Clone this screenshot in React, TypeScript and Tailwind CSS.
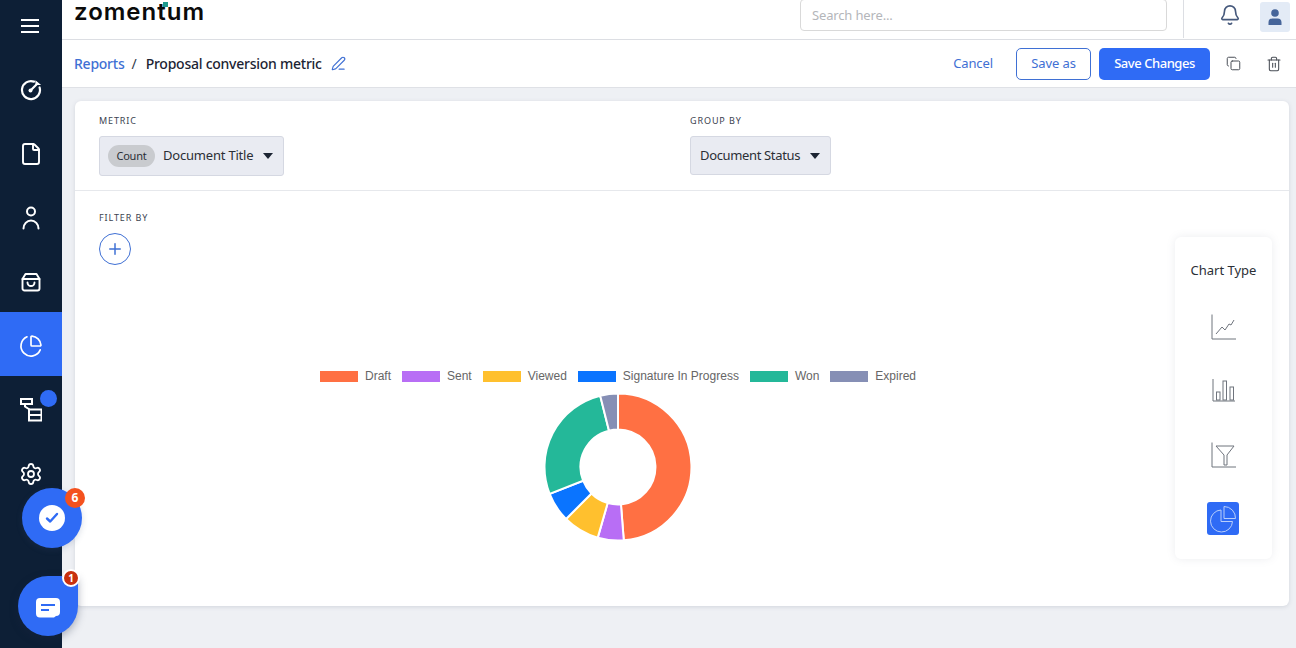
import React from 'react';
import { Bell, ChartPie, Copy, File, PenLine, Plus, Settings, Trash2 } from 'lucide-react';

const legend = [
  { label: 'Draft', color: '#ff7043' },
  { label: 'Sent', color: '#b86ef5' },
  { label: 'Viewed', color: '#ffc02e' },
  { label: 'Signature In Progress', color: '#0a74ff' },
  { label: 'Won', color: '#24b899' },
  { label: 'Expired', color: '#868fb5' },
];

// segment end angles, read off the reference
const stops = [175.5, 196, 225, 248.5, 346, 360];

const arcPath = (start: number, end: number, R: number, r: number, c: number) => {
  const pt = (a: number, rad: number) => {
    const t = ((a - 90) * Math.PI) / 180;
    return `${(c + rad * Math.cos(t)).toFixed(2)} ${(c + rad * Math.sin(t)).toFixed(2)}`;
  };
  const large = end - start > 180 ? 1 : 0;
  return `M${pt(start, R)} A${R} ${R} 0 ${large} 1 ${pt(end, R)} L${pt(end, r)} A${r} ${r} 0 ${large} 0 ${pt(start, r)} Z`;
};

const Donut = () => (
  <svg width="148" height="148" viewBox="0 0 148 148">
    {legend.map((s, i) => (
      <path
        key={s.label}
        d={arcPath(i === 0 ? 0 : stops[i - 1], stops[i], 73.5, 37.5, 74)}
        fill={s.color}
        stroke="#fff"
        strokeWidth="2"
      />
    ))}
  </svg>
);

const MenuIcon = () => (
  <svg width="18" height="14" viewBox="0 0 18 14" fill="none" stroke="#fff" strokeWidth="2">
    <path d="M0 1h18M0 7h18M0 13h18" />
  </svg>
);

const GaugeIcon = () => (
  <svg width="22" height="22" viewBox="0 0 22 22" fill="none" stroke="#fff" strokeWidth="2.2" strokeLinecap="round">
    <path d="M14 2.6A9 9 0 1 0 19.6 8.5" />
    <circle cx="10.5" cy="11.5" r="2" fill="#fff" stroke="none" />
    <path d="M11 11L16.5 5.5" />
    <path d="M16 2.5v3h3.5z" fill="#fff" strokeWidth="1.2" />
  </svg>
);

const PersonIcon = () => (
  <svg width="18" height="24" viewBox="0 0 18 24" fill="none" stroke="#fff" strokeWidth="2" strokeLinecap="round">
    <circle cx="9" cy="5.5" r="4" />
    <path d="M1.5 22.5a7.5 8 0 0 1 15 0" />
  </svg>
);

const BagIcon = () => (
  <svg width="20" height="20" viewBox="0 0 20 20" fill="none" stroke="#fff" strokeWidth="1.9" strokeLinecap="round" strokeLinejoin="round">
    <path d="M4.5 2h11l3 5v9.5a2 2 0 0 1-2 2h-13a2 2 0 0 1-2-2V7z" />
    <path d="M1.5 7h17" />
    <path d="M6.5 10.5a3.5 3.5 0 0 0 7 0" />
  </svg>
);

const TreeIcon = () => (
  <svg width="22" height="24" viewBox="0 0 22 24" fill="none" stroke="#fff" strokeWidth="2">
    <rect x="1" y="1" width="11" height="5" />
    <rect x="9" y="11.5" width="12.5" height="5.5" />
    <rect x="9" y="17" width="12.5" height="5.5" />
    <path d="M5 6v2.5l4.5 3" />
  </svg>
);

const NavItem = ({ active, children }: { active?: boolean; children: React.ReactNode }) => (
  <div className={`h-16 pt-1 flex items-center justify-center ${active ? 'bg-[#2f6bf5]' : ''}`}>{children}</div>
);

const Sidebar = () => (
  <aside className="w-[62px] shrink-0 bg-[#0d1f36] flex flex-col">
    <div className="h-[52px] mb-1 pr-[2px] flex items-center justify-center">
      <MenuIcon />
    </div>
    <NavItem><GaugeIcon /></NavItem>
    <NavItem><File className="h-6 w-6 text-white" strokeWidth={1.9} /></NavItem>
    <NavItem><PersonIcon /></NavItem>
    <NavItem><BagIcon /></NavItem>
    <NavItem active><ChartPie className="h-6 w-6 text-white" strokeWidth={1.7} /></NavItem>
    <NavItem><TreeIcon /></NavItem>
    <NavItem><Settings className="h-6 w-6 text-white" strokeWidth={1.8} /></NavItem>
  </aside>
);

const Header = () => (
  <header className="h-10 shrink-0 bg-white border-b border-[#dcdee3] flex items-start">
    <div className="relative ml-3 font-['Inter',sans-serif] font-semibold text-[24px] leading-[23px] tracking-[1px] text-[#0b0b0b]">
      zomentum
      <span className="absolute left-[89px] top-[2px] w-[5px] h-[5px] bg-[#1d9a8c]" />
    </div>
    <div className="ml-auto h-8 w-[367px] -mt-px border border-[#d9d9d9] rounded-[4px] flex items-center pt-[2px] px-[11px] text-[13px] tracking-[-0.15px] text-[#b4b6ba]">
      Search here...
    </div>
    <div className="ml-4 h-[38px] w-px bg-[#dcdee3]" />
    <Bell className="ml-[35px] mt-[4px] h-[22px] w-[22px] text-[#46597c]" strokeWidth={1.8} />
    <div className="ml-[19px] mr-[6px] mt-[2px] h-[30px] w-[30px] rounded-[3px] bg-[#e3ebf6] flex items-center justify-center">
      <svg width="14" height="16" viewBox="0 0 14 16" fill="#46659a">
        <circle cx="7" cy="4" r="3.8" />
        <path d="M0.5 16v-2.5a4 4 0 0 1 4-4h5a4 4 0 0 1 4 4V16z" />
      </svg>
    </div>
  </header>
);

const SubHeader = () => (
  <div className="h-12 shrink-0 bg-white border-b border-[#dfe1e6] flex items-center pl-3 text-[14px]">
    <span className="font-medium tracking-[-0.25px] text-[#3f70d4]">Reports</span>
    <span className="ml-[7px] text-[#333b4a]">/</span>
    <span className="ml-[9px] font-medium tracking-[-0.25px] text-[#1c2433]">Proposal conversion metric</span>
    <PenLine className="ml-[9px] h-[15px] w-[15px] text-[#3f70d4]" strokeWidth={1.8} />
    <span className="ml-auto text-[13px] tracking-[-0.1px] text-[#3f70d4]">Cancel</span>
    <button className="ml-[23px] h-8 w-[75px] pt-px rounded-[5px] border border-[#3f70d4] text-[13px] tracking-[-0.1px] text-[#3f70d4]">Save as</button>
    <button className="ml-2 h-8 w-[111px] pt-px rounded-[5px] bg-[#2f6bf5] text-[13px] tracking-[-0.45px] font-medium text-white">Save Changes</button>
    <Copy className="ml-[16px] h-[15px] w-[15px] text-[#4a4f57]" strokeWidth={1.6} />
    <Trash2 className="ml-[25px] mr-[14px] h-4 w-4 text-[#4a4f57]" strokeWidth={1.6} />
  </div>
);

const Caret = () => <span className="w-0 h-0 border-x-[5.5px] border-x-transparent border-t-[6px] border-t-[#1c2433]" />;

const FieldLabel = ({ children }: { children: React.ReactNode }) => (
  <div className="text-[9px] leading-3 tracking-[0.9px] text-[#3c4350]">{children}</div>
);

const ChartTypePanel = () => (
  <div className="absolute left-[1100px] top-[136px] w-[97px] h-[322px] bg-white rounded-[6px] shadow-[0_0_8px_rgba(120,130,150,0.14)] flex flex-col items-center pt-[26px]">
    <div className="text-[13px] leading-[14px] text-[#2b2f36]">Chart Type</div>
    <svg className="mt-[37px]" width="26" height="26" viewBox="0 0 26 26" fill="none" stroke="#6f747d" strokeWidth="1">
      <path d="M1 0.5V25H25" />
      <path d="M5 20l6-7 3 3 4-6 2 1 3-5" />
    </svg>
    <svg className="mt-[38px]" width="24" height="24" viewBox="0 0 24 24" fill="none" stroke="#6f747d" strokeWidth="1">
      <path d="M1 1V23H23" />
      <rect x="4.5" y="14" width="3.5" height="8" />
      <rect x="11" y="3" width="3.5" height="19" />
      <rect x="18" y="9" width="3.5" height="13" />
    </svg>
    <svg className="mt-[40px]" width="26" height="26" viewBox="0 0 26 26" fill="none" stroke="#6f747d" strokeWidth="1">
      <path d="M1 0.5V25H25" />
      <path d="M5 4h18l-7 9v10h-3V13z" />
    </svg>
    <div className="mt-[34px] mr-[2px] h-[33px] w-[32px] rounded-[3px] bg-[#2f6bf5] flex items-center justify-center">
      <svg width="28" height="28" viewBox="0 0 28 28" fill="none" stroke="#b9cffb" strokeWidth="1">
        <path d="M12 5A11 11 0 1 0 23.5 16.5H12z" />
        <path d="M15 1.5A11.5 11.5 0 0 1 26.5 13.5H15z" />
      </svg>
    </div>
  </div>
);

const Card = () => (
  <div className="relative mt-[13px] ml-[13px] mr-[7px] h-[505px] bg-white rounded-[6px] shadow-[0_1px_4px_rgba(90,100,120,0.18)]">
    <div className="h-[90px] border-b border-[#e6e8ec] flex pl-6 pt-[14px]">
      <div className="w-[591px]">
        <FieldLabel>METRIC</FieldLabel>
        <div className="mt-[9px] h-10 w-[185px] bg-[#e9ebf2] border border-[#d5d8e2] rounded-[3px] flex items-center pl-2 text-[13px] tracking-[-0.2px] text-[#2b2f36]">
          <span className="h-[22px] w-[47px] rounded-full bg-[#c9cbcf] text-[11px] flex items-center justify-center">Count</span>
          <span className="ml-2 mr-[10px]">Document Title</span>
          <Caret />
        </div>
      </div>
      <div>
        <FieldLabel>GROUP BY</FieldLabel>
        <div className="mt-[9px] h-[39px] w-[141px] bg-[#e9ebf2] border border-[#d5d8e2] rounded-[3px] flex items-center pl-[9px] text-[13px] tracking-[-0.35px] text-[#2b2f36]">
          <span className="mr-[10px]">Document Status</span>
          <Caret />
        </div>
      </div>
    </div>
    <div className="pl-6 pt-[21px]">
      <FieldLabel>FILTER BY</FieldLabel>
      <div className="mt-[9px] h-8 w-8 rounded-full border border-[#3f70d4] flex items-center justify-center">
        <Plus className="h-[18px] w-[18px] text-[#3f70d4]" strokeWidth={2} />
      </div>
    </div>
    <div className="w-[1086px] mt-[104px] flex flex-col items-center font-['Liberation_Sans',sans-serif] text-[12px] leading-[14px] text-[#666]">
      <div className="flex gap-[11px]">
        {legend.map((s) => (
          <div key={s.label} className="flex items-center gap-[7px]">
            <span className="h-[11px] w-[38px]" style={{ backgroundColor: s.color }} />
            <span>{s.label}</span>
          </div>
        ))}
      </div>
      <div className="mt-[10px]">
        <Donut />
      </div>
    </div>
    <ChartTypePanel />
  </div>
);

const FloatingButtons = () => (
  <>
    <div className="absolute left-[22px] top-[488px] h-[60px] w-[60px] rounded-full bg-[#2f6bf5] flex items-center justify-center shadow-[0_2px_6px_rgba(60,80,120,0.2)]">
      <div className="h-[26px] w-[26px] rounded-full bg-white flex items-center justify-center">
        <svg width="14" height="12" viewBox="0 0 14 12" fill="none" stroke="#2f6bf5" strokeWidth="2.4" strokeLinecap="round" strokeLinejoin="round">
          <path d="M2 6.5l3.2 3L12 2" />
        </svg>
      </div>
      <span className="absolute left-[43px] top-0 h-5 w-5 rounded-full bg-[#f4511e] text-[12px] font-bold text-white flex items-center justify-center">6</span>
    </div>
    <div className="absolute left-[18px] top-[576px] h-[60px] w-[60px] rounded-full rounded-tr-[6px] bg-[#2f6bf5] flex items-center justify-center shadow-[0_3px_8px_rgba(30,40,70,0.35)]">
      <svg className="mt-[3px]" width="24" height="20" viewBox="0 0 24 20">
        <path d="M4 0h16a4 4 0 0 1 4 4v10a4 4 0 0 1-4 4l-2 1.5H4a4 4 0 0 1-4-4V4a4 4 0 0 1 4-4z" fill="#fff" />
        <path d="M5 7h14M5 12h8" stroke="#2f6bf5" strokeWidth="2" />
      </svg>
      <span className="absolute left-[44px] -top-[7px] h-[18px] w-[18px] rounded-full border-2 border-white bg-[#c8300e] text-[10px] font-bold text-white flex items-center justify-center">1</span>
    </div>
    <span className="absolute left-[40px] top-[390px] h-[17px] w-[17px] rounded-full bg-[#2f6bf5]" />
  </>
);

export default function App() {
  return (
    <div className="relative h-[648px] w-[1296px] overflow-hidden flex font-['Noto_Sans',sans-serif] bg-[#eef0f4]">
      <Sidebar />
      <main className="flex-1 min-w-0 flex flex-col">
        <Header />
        <SubHeader />
        <Card />
      </main>
      <FloatingButtons />
    </div>
  );
}
